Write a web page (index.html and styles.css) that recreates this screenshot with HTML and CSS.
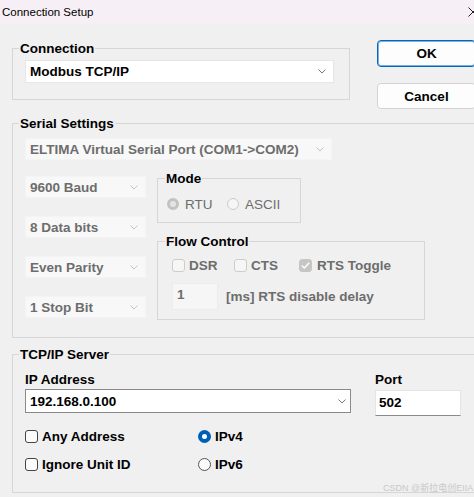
FILE: index.html
```html
<!DOCTYPE html>
<html>
<head>
<meta charset="utf-8">
<link rel="stylesheet" href="styles.css">
</head>
<body>
<div class="titlebar">
  <span class="title">Connection Setup</span>
  <svg class="close" width="10" height="10" viewBox="0 0 10 10"><path d="M0.5 0.5 L9.5 9.5 M9.5 0.5 L0.5 9.5" stroke="#222" stroke-width="1" fill="none"/></svg>
</div>
<div class="dialog">
  <div class="top-row">
    <div class="group group-conn">
      <div class="legend">Connection</div>
      <div class="combo combo-conn"><span>Modbus TCP/IP</span><svg class="chev" width="8" height="5" viewBox="0 0 8 5"><path d="M0.5 0.5 L4 4 L7.5 0.5" fill="none" stroke="#777" stroke-width="1"/></svg></div>
    </div>
    <div class="buttons">
      <button class="btn btn-default">OK</button>
      <button class="btn">Cancel</button>
    </div>
  </div>

  <div class="group group-serial">
    <div class="legend">Serial Settings</div>
    <div class="combo disabled combo-port"><span>ELTIMA Virtual Serial Port (COM1-&gt;COM2)</span><svg class="chev" width="8" height="5" viewBox="0 0 8 5"><path d="M0.5 0.5 L4 4 L7.5 0.5" fill="none" stroke="#c4c4c4" stroke-width="1"/></svg></div>
    <div class="serial-body">
      <div class="serial-left">
        <div class="combo disabled combo-small"><span>9600 Baud</span><svg class="chev" width="8" height="5" viewBox="0 0 8 5"><path d="M0.5 0.5 L4 4 L7.5 0.5" fill="none" stroke="#c4c4c4" stroke-width="1"/></svg></div>
        <div class="combo disabled combo-small"><span>8 Data bits</span><svg class="chev" width="8" height="5" viewBox="0 0 8 5"><path d="M0.5 0.5 L4 4 L7.5 0.5" fill="none" stroke="#c4c4c4" stroke-width="1"/></svg></div>
        <div class="combo disabled combo-small"><span>Even Parity</span><svg class="chev" width="8" height="5" viewBox="0 0 8 5"><path d="M0.5 0.5 L4 4 L7.5 0.5" fill="none" stroke="#c4c4c4" stroke-width="1"/></svg></div>
        <div class="combo disabled combo-small"><span>1 Stop Bit</span><svg class="chev" width="8" height="5" viewBox="0 0 8 5"><path d="M0.5 0.5 L4 4 L7.5 0.5" fill="none" stroke="#c4c4c4" stroke-width="1"/></svg></div>
      </div>
      <div class="serial-right">
        <div class="group group-mode">
          <div class="legend">Mode</div>
          <div class="radio-row">
            <div class="opt opt-rtu"><span class="radio radio-dis-on"></span><span class="lbl-dis-reg">RTU</span></div>
            <div class="opt"><span class="radio radio-dis"></span><span class="lbl-dis-reg">ASCII</span></div>
          </div>
        </div>
        <div class="group group-flow">
          <div class="legend">Flow Control</div>
          <div class="check-row">
            <div class="opt opt-dsr"><span class="check check-dis"></span><span class="lbl-dis">DSR</span></div>
            <div class="opt opt-cts"><span class="check check-dis"></span><span class="lbl-dis">CTS</span></div>
            <div class="opt"><span class="check check-dis-on"><svg width="9" height="7" viewBox="0 0 9 7"><path d="M0.8 3.5 L3.3 6 L8.2 0.8" fill="none" stroke="#fff" stroke-width="1.4"/></svg></span><span class="lbl-dis">RTS Toggle</span></div>
          </div>
          <div class="input-row">
            <div class="edit-dis">1</div>
            <span class="lbl-dis delay-lbl">[ms] RTS disable delay</span>
          </div>
        </div>
      </div>
    </div>
  </div>

  <div class="group group-tcp">
    <div class="legend">TCP/IP Server</div>
    <div class="tcp-row">
      <div class="ip-col">
        <div class="field-lbl">IP Address</div>
        <div class="combo combo-ip"><span>192.168.0.100</span><svg class="chev" width="8" height="5" viewBox="0 0 8 5"><path d="M0.5 0.5 L4 4 L7.5 0.5" fill="none" stroke="#777" stroke-width="1"/></svg></div>
      </div>
      <div class="port-col">
        <div class="field-lbl">Port</div>
        <div class="edit-port">502</div>
      </div>
    </div>
    <div class="opts">
      <div class="opt"><span class="check check-on"></span><span>Any Address</span></div>
      <div class="opt"><span class="radio radio-on"></span><span>IPv4</span></div>
      <div class="opt"><span class="check check-on"></span><span>Ignore Unit ID</span></div>
      <div class="opt"><span class="radio radio-off"></span><span>IPv6</span></div>
    </div>
  </div>
</div>
<div class="watermark">CSDN @新拉电创EIIA</div>
</body>
</html>
```
FILE: styles.css
```css
html, body {
  margin: 0;
  padding: 0;
}
body {
  position: relative;
  width: 474px;
  height: 497px;
  overflow: hidden;
  background: #f0f0f0;
  font-family: "Liberation Sans", Arial, sans-serif;
  font-size: 13.5px;
  font-weight: bold;
  color: #000;
}
.titlebar {
  height: 24px;
  background: #f6eff6;
  display: flex;
  align-items: center;
  justify-content: space-between;
  padding-left: 2px;
  font-weight: normal;
  font-size: 11.5px;
}
.close {
  flex: none;
  margin-right: -4px;
}
.dialog {
  padding-left: 12px;
  width: 500px;
}
.group {
  border: 1px solid #d6d6d6;
  box-sizing: border-box;
}
.legend {
  display: table;
  margin: -8px 0 0 -6px;
  padding: 0 1px;
  background: #f0f0f0;
  line-height: 15px;
}
.top-row {
  display: flex;
  align-items: flex-start;
  padding-top: 16px;
}
.group-conn {
  margin-top: 8px;
  width: 338px;
  padding: 0 15px 16px 12px;
}
.combo {
  display: flex;
  align-items: center;
  justify-content: space-between;
  box-sizing: border-box;
  padding: 0 7px 0 4px;
  background: #fff;
  white-space: nowrap;
}
.combo-conn {
  margin-top: 4px;
  height: 23px;
  border: 1px solid #e6e6e6;
}
.combo.disabled {
  background: #f8f8f8;
  border: 1px solid #f4f4f4;
  color: #6d6d6d;
  height: 22px;
}
.combo-port {
  margin-top: 7px;
  width: 307px;
}
.buttons {
  margin-left: 27px;
  display: flex;
  flex-direction: column;
  gap: 16px;
}
.btn {
  width: 99px;
  height: 26px;
  box-sizing: border-box;
  border: 1px solid #d3d3d3;
  border-radius: 4px;
  background: #fdfdfd;
  font: inherit;
  color: #000;
  padding: 0;
}
.btn-default {
  height: 27px;
  border: 1px solid #0067c0;
  box-shadow: inset 0 0 0 1px #7fb0dc;
}
.group-serial {
  margin-top: 14px;
  padding: 0 0 17px 12px;
}
.serial-body {
  display: flex;
  margin-top: 16px;
}
.serial-left {
  width: 121px;
  display: flex;
  flex-direction: column;
  gap: 18px;
}
.serial-right {
  margin-left: 11px;
}
.group-mode {
  margin-top: 2px;
  width: 144px;
  padding: 0 0 11px 9px;
}
.group-mode .legend {
  margin-left: -2px;
}
.radio-row, .check-row {
  display: flex;
  align-items: center;
  height: 14px;
}
.radio-row {
  margin-top: 11px;
}
.opt {
  display: flex;
  align-items: center;
  white-space: nowrap;
}
.opt-rtu {
  width: 60px;
}
.radio {
  width: 12px;
  height: 12px;
  border-radius: 50%;
  box-sizing: border-box;
  margin-right: 6px;
  flex: none;
}
.radio-dis-on {
  border: 3px solid #c2c2c2;
  background: #e4e4e4;
}
.radio-dis {
  border: 1px solid #cbcbcb;
  background: #f6f6f6;
}
.lbl-dis-reg {
  color: #6d6d6d;
  font-weight: normal;
}
.lbl-dis {
  color: #6d6d6d;
}
.group-flow {
  margin-top: 18px;
  width: 268px;
  padding: 0 0 9px 14px;
}
.group-flow .legend {
  margin-left: -7px;
}
.check-row {
  margin-top: 9px;
}
.opt-dsr {
  width: 62px;
}
.opt-cts {
  width: 65px;
}
.check {
  width: 13px;
  height: 13px;
  box-sizing: border-box;
  border-radius: 3px;
  margin-right: 4px;
  flex: none;
  display: flex;
  align-items: center;
  justify-content: center;
}
.check-dis {
  border: 1px solid #cdcdcd;
  background: #f6f6f6;
}
.check-dis-on {
  background: #c6c6c6;
  border: 1px solid #c6c6c6;
  margin-right: 5px;
}
.input-row {
  display: flex;
  align-items: center;
  margin-top: 11px;
}
.edit-dis {
  width: 46px;
  height: 27px;
  box-sizing: border-box;
  background: #f6f6f6;
  border: 1px solid #ececec;
  color: #6d6d6d;
  padding: 3px 0 0 4px;
}
.delay-lbl {
  margin-left: 8px;
}
.group-tcp {
  margin-top: 16px;
  padding: 0 0 21px 12px;
}
.tcp-row {
  display: flex;
  margin-top: 10px;
}
.field-lbl {
  line-height: 15px;
}
.ip-col {
  width: 326px;
}
.combo-ip {
  margin-top: 2px;
  height: 24px;
  border: 1px solid #8a8a8a;
  padding-right: 4px;
}
.port-col {
  margin-left: 24px;
}
.edit-port {
  margin-top: 3px;
  width: 86px;
  height: 26px;
  box-sizing: border-box;
  background: #fff;
  border: 1px solid #e4e4e4;
  border-bottom: 1px solid #8a8a8a;
  padding: 4px 0 0 3px;
}
.opts {
  display: grid;
  grid-template-columns: 173px auto;
  grid-auto-rows: 14px;
  row-gap: 14px;
  margin-top: 13px;
  align-items: center;
}
.check-on {
  border: 1px solid #444;
  background: #fbfbfb;
}
.radio-on {
  width: 13px;
  height: 13px;
  background: #fff;
  border: 4px solid #005fb8;
  margin-right: 4px;
}
.radio-off {
  width: 13px;
  height: 13px;
  border: 1px solid #555;
  background: #fbfbfb;
  margin-right: 4px;
}
.watermark {
  position: absolute;
  left: 383px;
  top: 481px;
  white-space: nowrap;
  font-family: "Liberation Sans", "Noto Sans CJK SC", sans-serif;
  font-size: 9px;
  font-weight: normal;
  color: #c8c8c8;
}
```
